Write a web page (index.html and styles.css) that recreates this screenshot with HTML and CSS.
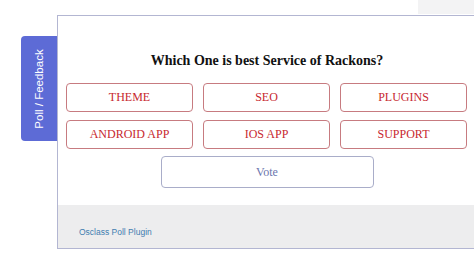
FILE: index.html
```html
<!DOCTYPE html>
<html lang="en">
	<head>
		<meta charset="utf-8" />
		<title>Poll</title>
		<meta name="viewport" content="width=device-width, initial-scale=1" />
		<link rel="stylesheet" href="styles.css">
	</head>
	<body>
		<div class="corner"></div>

		<div class="stage">
			<div class="tab"><span>Poll / Feedback</span></div>

			<div class="panel">
				<div class="poll">
					<h2 class="question">Which One is best Service of Rackons?</h2>

					<div class="options">
						<button class="option">THEME</button>
						<button class="option">SEO</button>
						<button class="option">PLUGINS</button>
						<button class="option">ANDROID APP</button>
						<button class="option">IOS APP</button>
						<button class="option">SUPPORT</button>
					</div>

					<button class="vote">Vote</button>
				</div>

				<div class="footer">
					<a href="#">Osclass Poll Plugin</a>
				</div>
			</div>
		</div>
	</body>
</html>
```

FILE: styles.css
```css
* { box-sizing: border-box; }

html,
body {
	margin: 0;
	background: #fff;
	overflow: hidden;
}

.corner {
	position: absolute;
	top: 0;
	right: 0;
	width: 56px;
	height: 14px;
	background: #f3f3f4;
}

.stage {
	display: flex;
	align-items: flex-start;
	padding: 15px 0 0 21px;
}

/* side tab */
.tab {
	width: 36px;
	height: 105px;
	margin-top: 21px;
	background: #5d6bd6;
	border-radius: 4px 0 0 4px;
	display: flex;
	align-items: center;
	justify-content: center;
}

.tab span {
	transform: rotate(-90deg);
	white-space: nowrap;
	color: #fff;
	font: 11.5px "Liberation Sans", Arial, sans-serif;
}

.panel {
	width: 420px;
	flex: none;
	border: 1px solid #b3b6d2;
	height: 234px;
	display: flex;
	flex-direction: column;
}

.poll {
	padding: 0 8px 17px 8px;
}

.question {
	margin: 37px 0 14px 0;
	text-align: center;
	font: bold 14px "Liberation Serif", "Times New Roman", serif;
	color: #111;
}

.options {
	display: grid;
	grid-template-columns: 127px 127px 127px;
	column-gap: 10px;
	row-gap: 8px;
}

.option {
	height: 29px;
	background: #fff;
	border: 1px solid #c77b80;
	border-radius: 4px;
	color: #c7282f;
	font: 12px "Liberation Serif", "Times New Roman", serif;
	padding: 0;
}

.vote {
	display: block;
	width: 213px;
	height: 32px;
	margin: 7px auto 0 auto;
	background: #fff;
	border: 1px solid #a9adc9;
	border-radius: 4px;
	color: #6c76ae;
	font: 12px "Liberation Serif", "Times New Roman", serif;
	padding: 0;
}

.footer {
	flex: 1;
	background: #ededee;
	padding: 16px 0 0 21px;
}

.footer a {
	color: #3f7db0;
	text-decoration: none;
	font: 8.5px "Liberation Sans", Arial, sans-serif;
}
```
